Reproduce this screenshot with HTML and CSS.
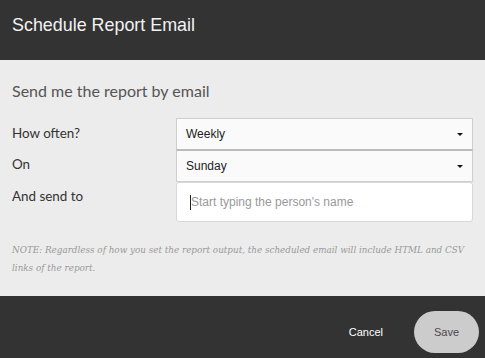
FILE: index.html
```html
<!DOCTYPE html>
<html>
<head>
<meta charset="utf-8">
<link rel="stylesheet" href="styles.css">
</head>
<body>
<div class="dialog">
  <div class="header"><h1 class="title">Schedule Report Email</h1></div>
  <div class="content">
    <div class="lead">Send me the report by email</div>
    <div class="form">
      <div class="label l1">How often?</div>
      <div class="select s1"><span>Weekly</span><span class="caret"></span></div>
      <div class="label l2">On</div>
      <div class="select s2"><span>Sunday</span><span class="caret"></span></div>
      <div class="label l3">And send to</div>
      <div class="input"><span class="cursor"></span><span class="ph">Start typing the person's name</span></div>
    </div>
    <p class="note">NOTE: Regardless of how you set the report output, the scheduled email will include HTML and CSV links of the report.</p>
  </div>
  <div class="footer">
    <button class="cancel">Cancel</button>
    <button class="save">Save</button>
  </div>
</div>
</body>
</html>
```
FILE: styles.css
```css
html, body { margin: 0; padding: 0; }
body { width: 485px; height: 358px; overflow: hidden; background: #ececec; }
.dialog { display: flex; flex-direction: column; height: 358px; }
.header { background: #333333; height: 60px; box-sizing: border-box; padding: 14px 12px 0; }
.title { margin: 0; font-family: "Liberation Sans", Arial, sans-serif; font-weight: normal; font-size: 17.9px; color: #f2f2f2; line-height: 22px; }
.content { background: #ececec; flex: 1; padding: 21px 12px 0; box-sizing: border-box; }
.lead { font-family: "Lato", sans-serif; font-size: 16px; color: #555; line-height: 20px; margin-bottom: 17px; }
.form { display: grid; grid-template-columns: 164px 297px; grid-template-rows: 32px 32px 40px; }
.label { font-family: "Lato", sans-serif; font-size: 13.4px; color: #333; line-height: 16px; padding-top: 7px; }
.l2 { padding-top: 6px; }
.l3 { padding-top: 6px; }
.select { background: #fafafa; border: 1px solid #cfcfcf; box-sizing: border-box; display: flex; align-items: center; justify-content: space-between; padding: 0 9px 0 9px; font-family: "Liberation Sans", Arial, sans-serif; font-size: 12px; color: #222; }
.s1 { border-bottom: 1px solid #bbb; }
.s2 { border-top: 1px solid #bbb; }
.caret { width: 0; height: 0; border-left: 3px solid transparent; border-right: 3px solid transparent; border-top: 3px solid #111; }
.input { background: #fff; border: 1px solid #d8d8d8; border-radius: 3px; box-sizing: border-box; display: flex; align-items: center; padding-left: 13px; font-family: "Liberation Sans", Arial, sans-serif; font-size: 12px; color: #999; }
.cursor { width: 1px; height: 15px; background: #222; }
.note { margin: 19px 0 0; font-family: "DejaVu Serif", Georgia, serif; font-style: italic; font-size: 8.8px; line-height: 18px; color: #999; }
.footer { background: #333333; height: 62px; box-sizing: border-box; display: flex; align-items: center; justify-content: flex-end; padding: 10px 6px 0 0; gap: 31px; }
button { border: none; font-family: "Liberation Sans", Arial, sans-serif; font-size: 11px; cursor: pointer; }
.cancel { background: transparent; color: #fff; padding: 0; }
.save { background: #cccccc; color: #4a4a4a; width: 65px; height: 42px; border-radius: 21px; }
```
